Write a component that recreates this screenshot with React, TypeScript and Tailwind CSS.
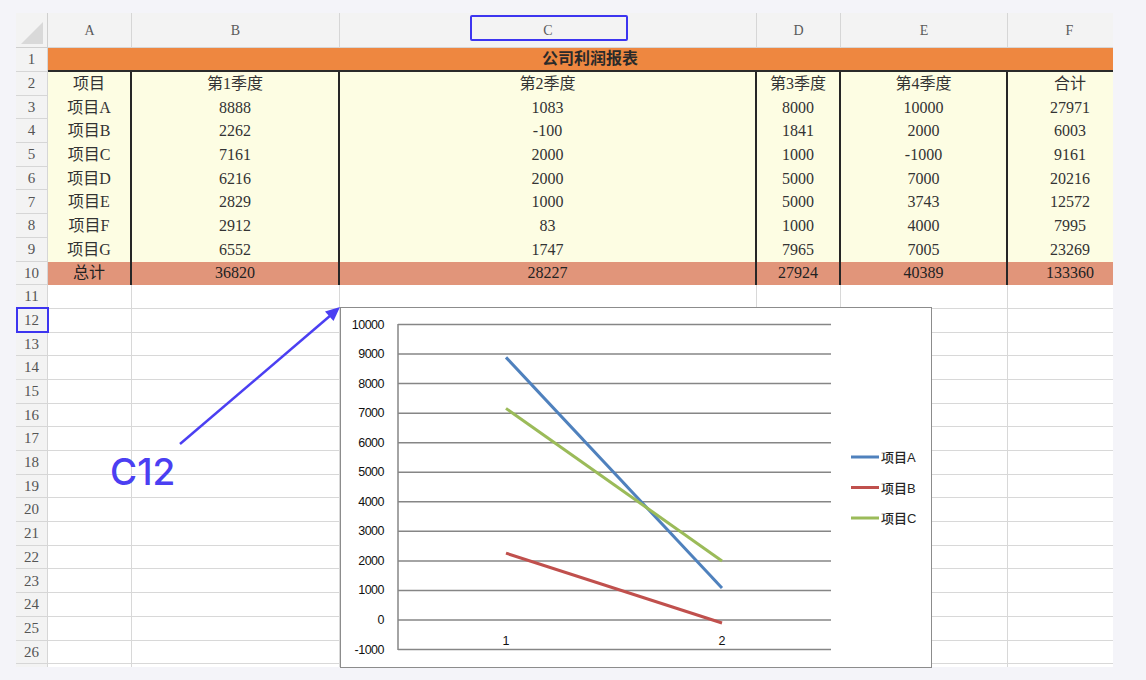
import React from 'react';

const COLS = 'grid grid-cols-[32px_84px_208px_417px_84px_167px_124px]';

const data: (string | number)[][] = [
    ['项目A', 8888, 1083, 8000, 10000, 27971],
    ['项目B', 2262, -100, 1841, 2000, 6003],
    ['项目C', 7161, 2000, 1000, -1000, 9161],
    ['项目D', 6216, 2000, 5000, 7000, 20216],
    ['项目E', 2829, 1000, 5000, 3743, 12572],
    ['项目F', 2912, 83, 1000, 4000, 7995],
    ['项目G', 6552, 1747, 7965, 7005, 23269],
];
const total: (string | number)[] = ['总计', 36820, 28227, 27924, 40389, 133360];
const heads = ['项目', '第1季度', '第2季度', '第3季度', '第4季度', '合计'];

function RowNum({ n }: { n?: number }) {
    return (
        <div className="h-[23.7px] flex items-center justify-center bg-[#f3f3f3] border-r border-b border-[#d6d6d6] text-[15px] text-[#555]">
            {n}
        </div>
    );
}

function DataRow({ n, cells, total }: { n: number; cells: (string | number)[]; total?: boolean }) {
    return (
        <div className={COLS}>
            <RowNum n={n} />
            {cells.map((c, i) => (
                <div
                    key={i}
                    className={
                        'h-[23.7px] flex items-center justify-center text-[16px] ' +
                        (total ? 'bg-[#e1957a] text-[#222] ' : 'bg-[#fdfde3] text-[#333] ') +
                        (i < 5 ? 'border-r-2 border-[#262626]' : '')
                    }
                >
                    {c}
                </div>
            ))}
        </div>
    );
}

function EmptyRow({ n }: { n?: number }) {
    return (
        <div className={COLS}>
            <RowNum n={n} />
            {[0, 1, 2, 3, 4, 5].map((i) => (
                <div key={i} className="h-[23.7px] bg-white border-r border-b-[1.5px] border-[#d8d8d8]" />
            ))}
        </div>
    );
}

function Chart() {
    const y = (v: number) => 312 - v * 0.02955;
    const grid = Array.from({ length: 12 }, (_, i) => 10000 - i * 1000);
    const series = [
        { name: '项目A', color: '#4f81bd', a: 8888, b: 1083 },
        { name: '项目B', color: '#c0504d', a: 2262, b: -100 },
        { name: '项目C', color: '#9bbb59', a: 7161, b: 2000 },
    ];
    return (
        <div className="absolute left-[340px] top-[307px] w-[592px] h-[361px] bg-white border border-[#8c8c8c]">
            <svg width="590" height="359" className="font-['Liberation_Sans','Noto_Sans_CJK_SC',sans-serif]">
                <line x1="57" y1="16" x2="57" y2="342" stroke="#868686" strokeWidth="1.5" />
                {grid.map((g) => (
                    <g key={g}>
                        <line x1="57" y1={y(g)} x2="490" y2={y(g)} stroke="#868686" strokeWidth="1.5" />
                        <text x="43" y={y(g) + 4} textAnchor="end" fontSize="12.5" fill="#111" letterSpacing="-0.5">
                            {g}
                        </text>
                    </g>
                ))}
                <text x="165" y="337" textAnchor="middle" fontSize="12.5" fill="#111">1</text>
                <text x="381" y="337" textAnchor="middle" fontSize="12.5" fill="#111">2</text>
                {series.map((s) => (
                    <line key={s.name} x1="165" y1={y(s.a)} x2="381" y2={y(s.b)} stroke={s.color} strokeWidth="3" />
                ))}
                {series.map((s, i) => (
                    <g key={s.name}>
                        <line x1="510" y1={149 + i * 30.5} x2="538" y2={149 + i * 30.5} stroke={s.color} strokeWidth="3" />
                        <text x="540" y={149 + i * 30.5 + 5} fontSize="13" fontWeight="500" fill="#262626">
                            {s.name}
                        </text>
                    </g>
                ))}
            </svg>
        </div>
    );
}

export default function App() {
    return (
        <div className="relative w-[1146px] h-[680px] bg-[#f4f4f9] pl-[16px] pt-[13px] overflow-hidden">
            <div className="w-[1097px] h-[654px] overflow-hidden bg-white font-['Liberation_Serif','Noto_Sans_CJK_SC',serif]">
                {/* column header */}
                <div className={COLS}>
                    <div className="relative h-[35px] bg-[#f3f3f3] border-r border-b border-[#cfcfcf]">
                        <div className="absolute right-[4px] bottom-[3px] w-0 h-0 border-l-[22px] border-l-transparent border-b-[22px] border-b-[#d9d9d9]" />
                    </div>
                    {['A', 'B', 'C', 'D', 'E', 'F'].map((l) => (
                        <div key={l} className="h-[35px] flex items-center justify-center bg-[#f3f3f3] border-r border-b border-[#d6d6d6] text-[14px] text-[#5a5a5a]">
                            {l}
                        </div>
                    ))}
                </div>

                {/* title row */}
                <div className={COLS}>
                    <div className="h-[24px] flex items-center justify-center bg-[#f3f3f3] border-r border-b border-[#d6d6d6] text-[15px] text-[#555]">
                        1
                    </div>
                    <div className="col-span-6 h-[24px] flex items-center justify-center bg-[#ee8740] border-b-2 border-[#2a2a2a] text-[16px] font-bold text-[#2a2a2a]">
                        公司利润报表
                    </div>
                </div>

                <DataRow n={2} cells={heads} />
                {data.map((r, i) => (
                    <DataRow key={i} n={i + 3} cells={r} />
                ))}
                <DataRow n={10} cells={total} total />
                {Array.from({ length: 16 }, (_, i) => (
                    <EmptyRow key={i} n={i + 11} />
                ))}
                <EmptyRow />
            </div>

            {/* selection markers */}
            <div className="absolute left-[470px] top-[15px] w-[158px] h-[26px] border-2 border-[#3d35f0] rounded-[2px]" />
            <div className="absolute left-[16px] top-[307px] w-[33px] h-[26px] border-2 border-[#3d35f0]" />

            <Chart />

            {/* arrow annotation */}
            <svg className="absolute left-0 top-0 pointer-events-none" width="1146" height="680">
                <line x1="180" y1="444" x2="331" y2="315" stroke="#4b3ff2" strokeWidth="2.5" />
                <polygon points="340,307 333.5,321 325,311.5" fill="#4b3ff2" />
            </svg>
            <div className="absolute left-[110px] top-[449px] text-[37px] leading-[46px] font-medium text-[#4b3ff2] font-['Inter',sans-serif]">
                C12
            </div>
        </div>
    );
}
